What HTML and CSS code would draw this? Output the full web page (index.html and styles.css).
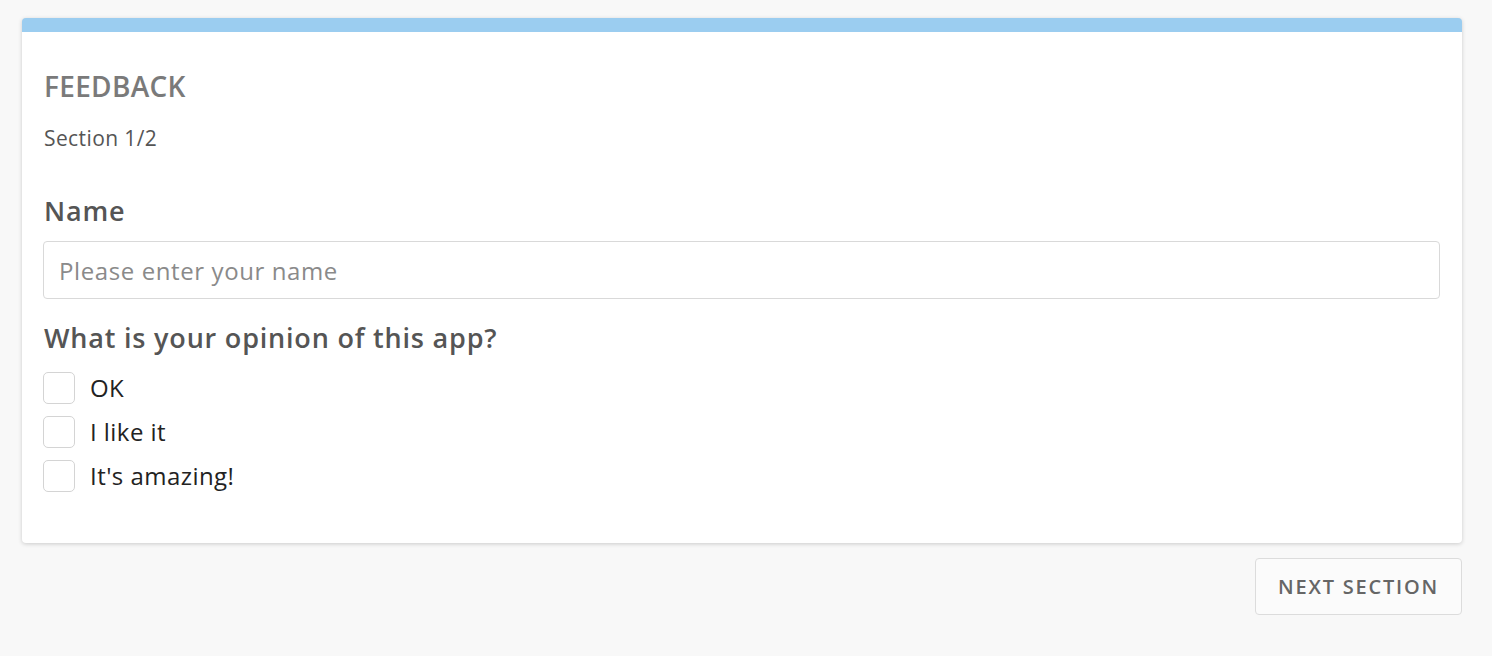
FILE: index.html
```html
<!DOCTYPE html>
<html>
<head>
<meta charset="utf-8">
<link rel="stylesheet" href="styles.css">
</head>
<body>
<div class="page">
  <div class="card">
    <div class="card-body">
      <h1 class="title">FEEDBACK</h1>
      <div class="subtitle">Section 1/2</div>
      <label class="field-label" for="name">Name</label>
      <input class="text-input" id="name" type="text" placeholder="Please enter your name">
      <div class="field-label question">What is your opinion of this app?</div>
      <div class="options">
        <label class="option"><span class="box"></span><span class="opt-text">OK</span></label>
        <label class="option"><span class="box"></span><span class="opt-text">I like it</span></label>
        <label class="option"><span class="box"></span><span class="opt-text">It's amazing!</span></label>
      </div>
    </div>
  </div>
  <div class="actions">
    <button class="btn">NEXT SECTION</button>
  </div>
</div>
</body>
</html>
```

FILE: styles.css
```css
html, body {
  margin: 0;
  padding: 0;
  background: #f8f8f8;
  font-family: "Open Sans", "Noto Sans", sans-serif;
}
.page {
  padding: 18px 30px 0 22px;
}
.card {
  background: #fff;
  border-top: 14px solid #9bcdf0;
  border-radius: 4px;
  box-shadow: 0 1px 4px rgba(0,0,0,0.18);
}
.card-body {
  padding: 36px 22px 51px 21px;
  display: flex;
  flex-direction: column;
}
.title {
  margin: 0;
  font-size: 28px;
  line-height: 36px;
  font-weight: 600;
  letter-spacing: 0.3px;
  color: #7a7a7a;
  padding-left: 1px;
}
.subtitle {
  margin-top: 19px;
  font-size: 21px;
  line-height: 30px;
  letter-spacing: 0.4px;
  color: #555;
  padding-left: 1px;
}
.field-label {
  margin-top: 40px;
  font-size: 27px;
  line-height: 36px;
  font-weight: 600;
  letter-spacing: 0.8px;
  color: #555;
  padding-left: 1px;
}
.text-input {
  margin-top: 12px;
  height: 58px;
  box-sizing: border-box;
  border: 1px solid #d9d9d9;
  border-radius: 4px;
  padding: 0 15px;
  font-family: inherit;
  font-size: 24px;
  letter-spacing: 0.6px;
  color: #333;
  outline: none;
}
.text-input::placeholder {
  color: #8a8a8a;
}
.question {
  margin-top: 21px;
}
.options {
  margin-top: 15px;
  display: flex;
  flex-direction: column;
  gap: 11px;
}
.option {
  display: flex;
  align-items: center;
  gap: 15px;
  height: 33px;
}
.box {
  width: 30px;
  height: 30px;
  border: 1px solid #d4d4d4;
  border-radius: 5px;
  background: #fff;
}
.opt-text {
  font-size: 24px;
  letter-spacing: 0.45px;
  color: #222;
}
.actions {
  display: flex;
  justify-content: flex-end;
  margin-top: 15px;
}
.btn {
  height: 57px;
  padding: 0 22px;
  background: #fbfbfb;
  border: 1px solid #dcdcdc;
  border-radius: 4px;
  font-family: inherit;
  font-size: 20px;
  font-weight: 600;
  letter-spacing: 1.8px;
  color: #666;
}
```
